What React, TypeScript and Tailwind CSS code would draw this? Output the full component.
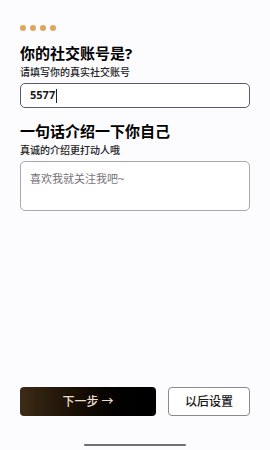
import React from "react";

const font = { fontFamily: '"Noto Sans", "Noto Sans CJK SC", sans-serif' };

function StepDots() {
  return (
    <div className="flex gap-[4px]">
      {[0, 1, 2, 3].map((i) => (
        <span key={i} className="block h-[6px] w-[6px] rounded-full bg-[#dca75c]" />
      ))}
    </div>
  );
}

export default function App() {
  return (
    <div
      className="flex h-[450px] w-full flex-col bg-[#fcfbfe] px-5 pt-[25px] text-[#111]"
      style={font}
    >
      <StepDots />

      <h2 className="mt-[12px] text-[15px] font-bold leading-[20px] text-black">你的社交账号是?</h2>
      <p className="mt-[2px] text-[10px] font-medium leading-[14px] text-[#222]">请填写你的真实社交账号</p>
      <div className="mt-[4px] flex h-[25px] items-center rounded-[5px] border-[1.5px] border-[#5e5873] bg-white px-[9px]">
        <span className="text-[11px] font-bold text-[#1a1a1a]">5577</span>
        <span className="ml-[1px] block h-[14px] w-[1px] bg-[#222]" />
      </div>

      <h2 className="mt-[13px] text-[15px] font-bold leading-[20px] text-black">一句话介绍一下你自己</h2>
      <p className="mt-[2px] text-[10px] font-medium leading-[14px] text-[#222]">真诚的介绍更打动人哦</p>
      <div className="mt-[4px] h-[50px] rounded-[5px] border border-[#a9a8ad] bg-white px-[9px] pt-[3px]">
        <span className="text-[11px] leading-[16px] text-[#77727a]">喜欢我就关注我吧~</span>
      </div>

      <div className="flex-1" />

      <div className="flex gap-[12px]">
        <button className="flex h-[29px] w-[136px] items-center justify-center rounded-[4px] bg-gradient-to-r from-[#3d2b16] to-black text-[12px] font-medium text-[#ebdfca]">
          下一步 →
        </button>
        <button className="flex h-[29px] flex-1 items-center justify-center rounded-[4px] border border-[#8a898e] bg-white text-[12px] font-medium text-[#1a1a1a]">
          以后设置
        </button>
      </div>

      <div className="mb-[4px] mt-[28px] flex justify-center">
        <span className="block h-[2px] w-[102px] rounded-full bg-[#6f6f72]" />
      </div>
    </div>
  );
}
